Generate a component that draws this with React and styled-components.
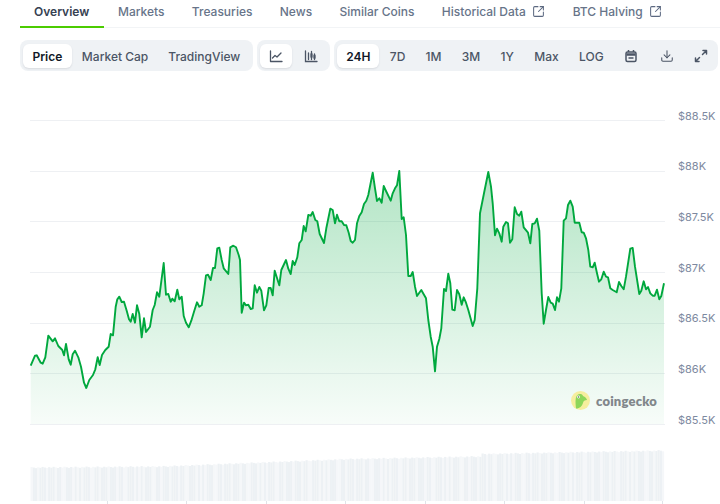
import React from "react";
import styled, { createGlobalStyle } from "styled-components";
import { Download, SquareArrowOutUpRight } from "lucide-react";

const GlobalStyle = createGlobalStyle`
  html, body { margin: 0; padding: 0; background: #fff; }
  body { width: 720px; height: 504px; overflow: hidden; font-family: Inter, "Liberation Sans", sans-serif; }
`;

const Page = styled.div`
  width: 720px;
  height: 504px;
  padding-left: 20px;
  box-sizing: border-box;
  overflow: hidden;
`;

const TabBar = styled.nav`
  display: flex;
  height: 28px;
  border-bottom: 1px solid #f2f4f6;
  box-sizing: border-box;
`;

const Tab = styled.a`
  display: flex;
  align-items: center;
  gap: 6.5px;
  height: 28px;
  box-sizing: border-box;
  padding: 0 ${p => (p.$active ? 15 : 13.7)}px 3px ${p => (p.$active ? 14 : 13.7)}px;
  font-size: 12px;
  font-weight: ${p => (p.$active ? 600 : 500)};
  color: ${p => (p.$active ? "#364152" : "#677489")};
  border-bottom: 2px solid ${p => (p.$active ? "#4bcc00" : "transparent")};
`;

const Toolbar = styled.div`
  display: flex;
  gap: 4px;
  margin-top: 12px;
`;

const Group = styled.div`
  display: flex;
  align-items: center;
  gap: ${p => p.$gap ?? 0}px;
  width: ${p => p.$width}px;
  height: 31px;
  padding: 0 3px;
  box-sizing: border-box;
  background: #eff2f5;
  border-radius: 8px;
`;

const ToolButton = styled.button`
  display: flex;
  align-items: center;
  justify-content: center;
  height: 24px;
  padding: 1px ${p => p.$pad ?? 10}px 0;
  border: 0;
  border-radius: 6px;
  font-family: inherit;
  font-size: 12px;
  font-weight: ${p => (p.$active ? 600 : 500)};
  color: ${p => (p.$active ? "#111827" : "#4b5565")};
  background: ${p => (p.$active ? "#fff" : "transparent")};
  box-shadow: ${p => (p.$active ? "0 1px 2px rgba(16,24,40,.1)" : "none")};
`;

const ChartArea = styled.div`
  position: relative;
  margin-top: 30px;
  margin-left: -20px;
  width: 720px;
  height: 403px;
`;

const ChartSvg = styled.svg`
  display: block;
`;

const AxisLabels = styled.div`
  position: absolute;
  left: 678px;
  top: 0;
  height: 100%;
`;

const AxisLabel = styled.span`
  position: absolute;
  top: ${p => p.$top}px;
  left: 0;
  font-size: 11px;
  line-height: 14px;
  color: #7d89a0;
  white-space: nowrap;
`;

const Watermark = styled.div`
  position: absolute;
  left: 571px;
  top: 290px;
  display: flex;
  align-items: center;
  gap: 6px;
  font-family: Lato, Inter, sans-serif;
  font-size: 13px;
  font-weight: 800;
  letter-spacing: 0.2px;
  color: #81878b;
`;

const tabs = [
  { label: "Overview", active: true },
  { label: "Markets" },
  { label: "Treasuries" },
  { label: "News" },
  { label: "Similar Coins" },
  { label: "Historical Data", external: true },
  { label: "BTC Halving", external: true },
];

const axis = ["$88.5K", "$88K", "$87.5K", "$87K", "$86.5K", "$86K", "$85.5K"];

// traced from the zoomed chart, in 3x crop coords
const seg1 = "92,617 105,587 110,586 122,608 128,611 136,592 145,527 158,544 165,535 175,558 187,570 192,586 198,552 206,598 212,614 218,583 225,572 235,592 243,620 252,668 259,684 268,660 279,645 286,628 293,592 299,615 306,585 316,570 326,560 332,522 339,526 347,440 352,418 358,410 365,426 372,425 380,452 387,478 392,485 398,462 405,488 411,436 418,462 425,532 432,475 438,516 450,500 458,450 464,435 471,397 478,410 491,309 498,404 505,402 512,425 517,416 524,424 532,389 538,418 545,410 551,468 558,488 566,502 574,482 582,455 591,427 598,440 605,436 611,400 618,346 624,344 632,360 639,324 645,324 652,265 658,263 665,300 671,325 685,342 691,262 700,257 708,262 716,285";
const seg2 = "0,300 5,458 12,428 18,436 25,434 32,447 38,445 44,376 51,398 58,381 64,392 72,451 79,436 86,384 92,384 98,406 104,332 118,376 124,330 138,300 145,326 152,342 158,303 164,315 172,292 178,250 185,240 191,198 197,214 205,165 212,167 218,156 226,180 232,184 239,222 252,249 259,205 271,146 278,150 285,190 291,164 298,184 305,184 312,195 319,196 326,218 332,243 338,248 345,240 351,190 358,168 365,157 372,132 379,122 385,105 398,38 405,85 411,123 418,115 425,128 431,78 438,93 452,122 458,100 465,85 471,76 478,33 485,177 491,172 498,225 505,348 512,348 518,336 525,380 531,408 538,398 544,390 551,403 558,415 565,480 572,530 578,560 585,634 591,560 598,537 604,505 612,387 618,393 625,341 631,370 637,449 644,451 651,390 658,403 665,434 671,412 678,428 685,450 698,498 704,480 712,385";
const seg3 = "0,160 12,100 25,36 33,80 38,130 45,226 51,206 58,220 65,245 70,200 78,186 84,190 90,248 97,238 104,142 111,162 118,167 124,155 131,202 144,218 151,250 157,192 164,190 171,176 178,212 185,400 191,491 198,450 205,411 212,428 218,431 225,450 231,412 237,425 244,385 251,182 258,175 264,135 271,122 278,140 284,188 298,188 305,217 311,218 318,235 325,270 331,320 338,322 344,308 351,340 357,365 364,358 371,335 378,350 384,352 391,385 398,390 410,397 417,366 424,378 431,388 438,350 451,266 458,264 465,320 478,402 484,392 491,364 498,388 504,381 511,400 518,407 524,407 531,389 538,418 544,408 552,370";

const toPts = (seg, xOff) =>
  seg.split(" ").map(s => {
    const [x, y] = s.split(",").map(Number);
    return [+(xOff + x / 3).toFixed(1), +(160 + y / 3).toFixed(1)];
  });

const line = [...toPts(seg1, 0), ...toPts(seg2, 240), ...toPts(seg3, 480)];
const linePts = line.map(p => p.join(",")).join(" ");
const areaPts = `30.7,424 ${linePts} 664,424`;

const grid = [120.5, 171.5, 221.5, 272.5, 323.5, 373.5, 424.5];
const ticks = [107.5, 186.5, 266.5, 345.5, 425.5, 504.5, 584.5, 662.5];

// volume bars: top edge climbs slowly left to right
const volTop = x => {
  if (x < 160) return 467 - (x - 30) * 0.008;
  if (x < 340) return 466 - (x - 160) * 0.04;
  if (x < 480) return 458.7 - (x - 340) * 0.02;
  return 453.5 - (x - 480) * 0.019;
};
const bars = [];
for (let i = 0; i < 288; i++) {
  const x = 30.5 + i * 2.2;
  const wobble = ((i * 7) % 5) * 0.3;
  bars.push({ x, y: volTop(x) + wobble, o: i % 4 === 3 || i % 7 === 0 ? 0.55 : 1 });
}

const ICON = "#4b5565";

const LineIcon = () => (
  <svg width="14" height="14" viewBox="0 0 14 14" fill="none" stroke={ICON} strokeWidth="1.3" strokeLinecap="round" strokeLinejoin="round">
    <path d="M1.5 2v10.5h11.5" />
    <path d="M3.5 9l2.5-2.5 2 1.5 4-4" />
  </svg>
);

const CandleIcon = () => (
  <svg width="14" height="14" viewBox="0 0 14 14" fill="none" stroke={ICON} strokeWidth="1.3" strokeLinecap="round">
    <path d="M1.5 2v10.5h11.5" />
    <path d="M4.5 4v6.5M7.5 2.5v8" />
    <path d="M10.5 5v5.5" />
    <path d="M7.5 5v3M10.5 6.5v2.5" strokeWidth="2.2" />
  </svg>
);

const CalendarIcon = () => (
  <svg width="14" height="14" viewBox="0 0 14 14" fill="none" stroke={ICON} strokeWidth="1.5">
    <rect x="2" y="3" width="10" height="9.5" rx="1.5" />
    <path d="M2.5 5.5h9" strokeWidth="2.5" />
    <path d="M4.5 1v2M9.5 1v2M4.5 9h5" />
  </svg>
);

const ExpandIcon = () => (
  <svg width="14" height="14" viewBox="0 0 14 14" fill="none" stroke={ICON} strokeWidth="1.5" strokeLinecap="round" strokeLinejoin="round">
    <path d="M9 1.5h3.5V5M12.5 1.5L8.5 5.5" />
    <path d="M5 12.5H1.5V9M1.5 12.5l4-4" />
  </svg>
);

export default function App() {
  return (
    <Page>
      <GlobalStyle />
      <TabBar>
        {tabs.map(t => (
          <Tab key={t.label} $active={t.active}>
            {t.label}
            {t.external && <SquareArrowOutUpRight size={13} strokeWidth={1.9} color="#5b6880" />}
          </Tab>
        ))}
      </TabBar>

      <Toolbar>
        <Group>
          <ToolButton $active $pad={9.5}>Price</ToolButton>
          <ToolButton>Market Cap</ToolButton>
          <ToolButton>TradingView</ToolButton>
        </Group>
        <Group $gap={3} $width={73}>
          <ToolButton $active $pad={9}><LineIcon /></ToolButton>
          <ToolButton $pad={9}><CandleIcon /></ToolButton>
        </Group>
        <Group $gap={0.3} $width={384}>
          <ToolButton $active $pad={9}>24H</ToolButton>
          <ToolButton>7D</ToolButton>
          <ToolButton>1M</ToolButton>
          <ToolButton>3M</ToolButton>
          <ToolButton>1Y</ToolButton>
          <ToolButton>Max</ToolButton>
          <ToolButton>LOG</ToolButton>
          <ToolButton $pad={10.5}><CalendarIcon /></ToolButton>
          <ToolButton $pad={10.5}><Download size={14} strokeWidth={1.8} color={ICON} /></ToolButton>
          <ToolButton $pad={9}><ExpandIcon /></ToolButton>
        </Group>
      </Toolbar>

      <ChartArea>
        <ChartSvg width="720" height="403" viewBox="0 101 720 403">
          <defs>
            <linearGradient id="areaFill" gradientUnits="userSpaceOnUse" x1="0" y1="171" x2="0" y2="424">
              <stop offset="0" stopColor="#00a83e" stopOpacity="0.3" />
              <stop offset="1" stopColor="#00a83e" stopOpacity="0.03" />
            </linearGradient>
          </defs>
          {grid.map(y => (
            <line key={y} x1="30" x2="665" y1={y} y2={y} stroke="#eef0f3" strokeWidth="1" />
          ))}
          <polygon points={areaPts} fill="url(#areaFill)" />
          <polyline points={linePts} fill="none" stroke="#00a83e" strokeWidth="1.9" strokeLinejoin="round" />
          {bars.map((b, i) => (
            <rect key={i} x={b.x} y={b.y} width="2.2" height={501 - b.y} fill="#edf1f4" opacity={b.o} />
          ))}
          {ticks.map(x => (
            <line key={x} x1={x} x2={x} y1="501" y2="504" stroke="#dfe3e8" strokeWidth="1" />
          ))}
        </ChartSvg>
        <AxisLabels>
          {axis.map((a, i) => (
            <AxisLabel key={a} $top={7.5 + i * 50.7}>{a}</AxisLabel>
          ))}
        </AxisLabels>
        <Watermark>
          <svg width="19" height="19" viewBox="0 0 19 19">
            <circle cx="9.5" cy="9.5" r="9.5" fill="#f6ee9e" />
            <path d="M5 17.5 C4.5 12 4 7 6 4.5 C8 2.5 11 2.5 12 5 C14 6 16 7.5 16 9 C14 9 12 10 12 12 C11 15 9 17.5 5 17.5Z" fill="#8dd65a" />
            <circle cx="7.5" cy="6" r="1.4" fill="#fff" />
            <circle cx="7.5" cy="6" r="0.7" fill="#58595b" />
          </svg>
          coingecko
        </Watermark>
      </ChartArea>
    </Page>
  );
}
